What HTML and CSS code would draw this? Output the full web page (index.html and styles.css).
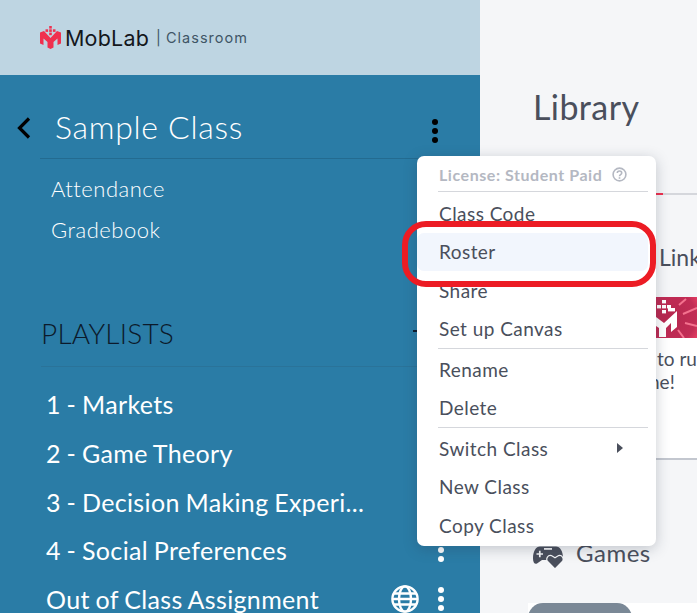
FILE: index.html
```html
<!DOCTYPE html>
<html lang="en">
<head>
  <meta charset="UTF-8">
  <meta name="viewport" content="width=device-width, initial-scale=1.0">
  <title>MobLab Classroom</title>
  <link rel="stylesheet" href="styles.css">
</head>
<body>
  <div class="page">
    <aside class="sidebar">
      <div class="brand">
        <svg class="brand-logo" width="21" height="23" viewBox="0 0 21 23">
          <g fill="#f0304f">
            <rect x="9.2" y="0" width="2.6" height="2.6"/>
            <rect x="5.5" y="3.3" width="2.6" height="2.6"/>
            <rect x="9.2" y="3.3" width="2.6" height="2.6"/>
            <rect x="12.9" y="3.3" width="2.6" height="2.6"/>
            <rect x="9.2" y="6.6" width="2.6" height="2.6"/>
            <path d="M0 6.5 L4 5 L10.5 12 L17 5 L21 6.5 V17.5 L17.5 19 V12.5 L13.5 16 V21.5 L10.5 23 L7.5 21.5 V16 L3.5 12.5 V19 L0 17.5 Z"/>
          </g>
        </svg>
        <span class="brand-name">MobLab</span>
        <span class="brand-sub">| Classroom</span>
      </div>

      <div class="class-head">
        <svg class="back-icon" width="15" height="22" viewBox="0 0 15 22">
          <path d="M13 1.5 L3.5 11 L13 20.5" fill="none" stroke="#000" stroke-width="3.2"/>
        </svg>
        <h1 class="class-title">Sample Class</h1>
        <div class="dots dots-dark"><i></i><i></i><i></i></div>
      </div>

      <nav class="class-links">
        <a>Attendance</a>
        <a>Gradebook</a>
      </nav>

      <div class="playlists-head">
        <h2>PLAYLISTS</h2>
        <span class="plus"></span>
      </div>

      <ul class="playlists">
        <li><span class="pl-name">1 - Markets</span></li>
        <li><span class="pl-name">2 - Game Theory</span></li>
        <li><span class="pl-name">3 - Decision Making Experi...</span></li>
        <li>
          <span class="pl-name">4 - Social Preferences</span>
          <div class="dots"><i></i><i></i><i></i></div>
        </li>
        <li>
          <span class="pl-name">Out of Class Assignment</span>
          <svg class="globe" width="28" height="28" viewBox="0 0 28 28" fill="none" stroke="#fff" stroke-width="2.4">
            <circle cx="14" cy="14" r="12.6"/>
            <ellipse cx="14" cy="14" rx="6" ry="12.6"/>
            <path d="M3 8.5 H25 M1.5 14 H26.5 M3 19.5 H25"/>
          </svg>
          <div class="dots"><i></i><i></i><i></i></div>
        </li>
      </ul>
    </aside>

    <main class="content">
      <h1 class="lib-title">Library</h1>
      <div class="tabs"><span class="tab-on"></span></div>

      <div class="card">
        <div class="card-title">Link</div>
        <div class="card-banner">
          <svg width="41" height="41" viewBox="0 0 41 41">
            <g stroke="#f4728f" stroke-width="2">
              <path d="M23 8 L30 2 M27 17 L41 11 M29 26 L41 29 M22 33 L28 41"/>
            </g>
            <g fill="#fff">
              <rect x="6" y="3" width="4" height="3.4"/>
              <rect x="1" y="8" width="4" height="3.4"/>
              <rect x="6" y="8" width="4" height="3.4"/>
              <rect x="11" y="8" width="4" height="3.4"/>
              <rect x="6" y="13" width="4" height="3.4"/>
              <rect x="12" y="11" width="7" height="3.4"/>
              <path d="M0 20 L8 26 L21 14 V30 L15 35 V26 L10 31 V40 H3 V31 L0 29 Z"/>
            </g>
          </svg>
        </div>
        <div class="card-body">
          <p class="card-line card-line-first">to run</p>
          <p class="card-line card-line-second">ne!</p>
        </div>
      </div>

      <div class="games">
        <svg class="games-icon" width="30" height="23" viewBox="0 0 30 23">
          <path d="M7 0.5 H23 C27 0.5 30 5 30 12 C30 16.5 28 18 26 17 L21 14 H9 L4 17.5 C2 18.5 0 17 0 12.5 C0 5 3 0.5 7 0.5 Z" fill="#4a4f5c"/>
          <path d="M3.5 8 H10 M6.8 4.8 V11.2" stroke="#f5f6f8" stroke-width="1.7"/>
          <rect x="11" y="2" width="8" height="1.8" fill="#f5f6f8"/>
          <path d="M22 23 L14.6 15.5 C12.4 12.6 15 8.6 18.4 9.6 L22 11.8 L25.6 9.6 C29 8.6 31.4 12.6 29.4 15.5 Z" fill="#4a4f5c" stroke="#f5f6f8" stroke-width="1.2"/>
        </svg>
        <span>Games</span>
      </div>

      <div class="peek">
        <span class="peek-thumb"></span>
      </div>
    </main>
  </div>

  <div class="menu">
    <div class="menu-license">License: Student Paid
      <svg width="15" height="15" viewBox="0 0 15 15" fill="none" stroke="#b4b8c2" stroke-width="1.6">
        <circle cx="7.5" cy="7.5" r="6.4"/>
        <path d="M5.3 6 C5.3 3.4 9.7 3.4 9.7 6 C9.7 7.6 7.5 7.6 7.5 9.2"/>
        <path d="M7.5 10.2 V11.8"/>
      </svg>
    </div>
    <div class="menu-group">
      <a>Class Code</a>
      <a class="active">Roster</a>
      <a>Share</a>
      <a>Set up Canvas</a>
    </div>
    <div class="menu-group menu-group-next">
      <a>Rename</a>
      <a>Delete</a>
    </div>
    <div class="menu-group menu-group-next">
      <a class="has-sub">Switch Class <span class="sub-arrow"></span></a>
      <a>New Class</a>
      <a>Copy Class</a>
    </div>
  </div>

  <div class="highlight-ring"></div>
</body>
</html>
```

FILE: styles.css
```css
html, body {
  margin: 0;
  padding: 0;
  height: 100%;
  overflow: hidden;
}

body {
  font-family: 'Lato', sans-serif;
  color: #4a4f5c;
  position: relative;
}

.page {
  display: flex;
  height: 613px;
  overflow: hidden;
}

/* left side */
.sidebar {
  width: 480px;
  flex-shrink: 0;
  background: #2a7ca6;
  color: #fff;
}

.brand {
  height: 75px;
  background: #bed5e2;
  display: flex;
  align-items: center;
  padding-left: 40px;
  box-sizing: border-box;
}

.brand-logo {
  margin-right: 4px;
}

.brand-name {
  font-family: 'Inter', sans-serif;
  font-size: 21.5px;
  color: #14171c;
  letter-spacing: 0.2px;
}

.brand-sub {
  font-family: 'Inter', sans-serif;
  font-size: 14.5px;
  color: #3f5566;
  letter-spacing: 1px;
  word-spacing: -1px;
  margin-left: 7px;
}

.class-head {
  margin: 0 45px 0 40px;
  height: 84px;
  padding-top: 20px;
  display: flex;
  align-items: center;
  border-bottom: 1px solid #236b90;
  box-sizing: border-box;
  position: relative;
}

.back-icon {
  position: absolute;
  left: -24px;
  top: 42px;
}

.class-title {
  flex: 1;
  margin: 0 0 0 15px;
  font-size: 32px;
  font-weight: 300;
  letter-spacing: 0.7px;
}

.dots {
  display: flex;
  flex-direction: column;
  gap: 3px;
}

.dots i {
  display: block;
  width: 6px;
  height: 6px;
  border-radius: 50%;
  background: #fff;
}

.dots-dark {
  margin-top: 8px;
  transform: translateX(3px);
}

.dots-dark i {
  background: #000;
}

.class-links {
  display: flex;
  flex-direction: column;
  padding: 9px 0 0 51px;
}

.class-links a {
  font-size: 22px;
  font-weight: 300;
  line-height: 41px;
  letter-spacing: 0.5px;
}

.playlists-head {
  margin: 64px 45px 0 41px;
  height: 52px;
  border-bottom: 1px solid #2a7399;
  position: relative;
}

.playlists-head h2 {
  margin: 0;
  font-size: 28px;
  font-weight: 300;
  color: #0c1a2b;
  line-height: 38px;
  letter-spacing: 0.2px;
}

.plus {
  position: absolute;
  left: 372px;
  top: 16px;
  width: 6px;
  height: 2px;
  background: #0c1a2b;
}

.playlists {
  list-style: none;
  margin: 0;
  padding: 13px 0 0 46px;
}

.playlists li {
  height: 48.7px;
  display: flex;
  align-items: center;
  padding-right: 36px;
}

.pl-name {
  flex: 1;
  font-size: 25px;
  letter-spacing: 0.35px;
  word-spacing: -1px;
}

.globe {
  margin-right: 19px;
}

/* right side */
.content {
  flex: 1;
  background: #f5f6f8;
  position: relative;
  min-width: 0;
}

.lib-title {
  margin: 0;
  padding: 85px 0 0 53px;
  font-size: 34px;
  font-weight: 400;
  line-height: 44px;
  letter-spacing: 0.4px;
}

.tabs {
  margin-top: 64px;
  height: 2px;
  background: #d5d7dc;
}

.tab-on {
  display: block;
  width: 183px;
  height: 2px;
  background: #f0304f;
}

.card {
  margin-top: 34px;
  height: 231px;
  border-bottom: 2px solid #c3c7cf;
  box-sizing: border-box;
  padding-top: 15px;
  display: flex;
  flex-direction: column;
  overflow: hidden;
}

.card-title {
  padding-left: 179px;
  font-size: 23px;
  line-height: 26px;
  white-space: nowrap;
}

.card-banner {
  margin-top: 27px;
  height: 41px;
  flex-shrink: 0;
  background:
    radial-gradient(circle at 190px 20px, #b5284f 0, #c22c55 26px, transparent 36px),
    linear-gradient(110deg, #d83057, #f04368);
  padding-left: 176px;
  overflow: hidden;
}

.card-body {
  flex: 1;
  background: #fff;
  padding-top: 9px;
}

.card-line {
  margin: 0;
  font-size: 19px;
  line-height: 23px;
  white-space: nowrap;
}

.card-line-first {
  padding-left: 177px;
}

.card-line-second {
  padding-left: 169px;
}

.games {
  margin: 78px 0 0 53px;
  display: flex;
  align-items: center;
  gap: 13px;
  font-size: 24px;
  letter-spacing: 0.5px;
}

.games-icon {
  transform: translateY(5px);
}

.peek {
  position: absolute;
  left: 48px;
  right: 0;
  top: 603px;
  height: 10px;
  background: #fff;
  overflow: hidden;
}

.peek-thumb {
  display: block;
  width: 104px;
  height: 30px;
  border-radius: 15px 15px 0 0;
  background: #7a8896;
}

/* dropdown over the sidebar */
.menu {
  position: absolute;
  left: 417px;
  top: 156px;
  width: 239px;
  height: 390px;
  box-sizing: border-box;
  padding-right: 8px;
  background: #fff;
  border-radius: 7px;
  box-shadow: 0 3px 14px rgba(40, 50, 70, 0.25);
  font-size: 19px;
  letter-spacing: 0.45px;
}

.menu-license {
  margin-left: 21px;
  padding: 2px 0 0 1px;
  height: 36px;
  display: flex;
  align-items: center;
  gap: 10px;
  font-size: 16px;
  font-weight: 700;
  letter-spacing: 0.55px;
  color: #b4b8c2;
  border-bottom: 1px solid #d5d7dc;
  box-sizing: border-box;
}

.menu-group {
  padding-top: 2px;
  position: relative;
}

.menu-group-next::before {
  content: "";
  position: absolute;
  left: 21px;
  right: 0;
  top: 0;
  height: 1px;
  background: #d5d7dc;
}

.menu-group a {
  display: flex;
  align-items: center;
  height: 38.5px;
  padding-left: 22px;
}

.menu-group a.active {
  background: #f2f6fd;
  border-radius: 7px;
}

.has-sub {
  position: relative;
}

.sub-arrow {
  position: absolute;
  left: 200px;
  top: 14px;
  border-left: 6px solid #4a4f5c;
  border-top: 5px solid transparent;
  border-bottom: 5px solid transparent;
}

.highlight-ring {
  position: absolute;
  left: 402px;
  top: 221px;
  width: 254px;
  height: 66px;
  box-sizing: border-box;
  border: 6px solid #ec1c24;
  border-radius: 24px;
}
```
